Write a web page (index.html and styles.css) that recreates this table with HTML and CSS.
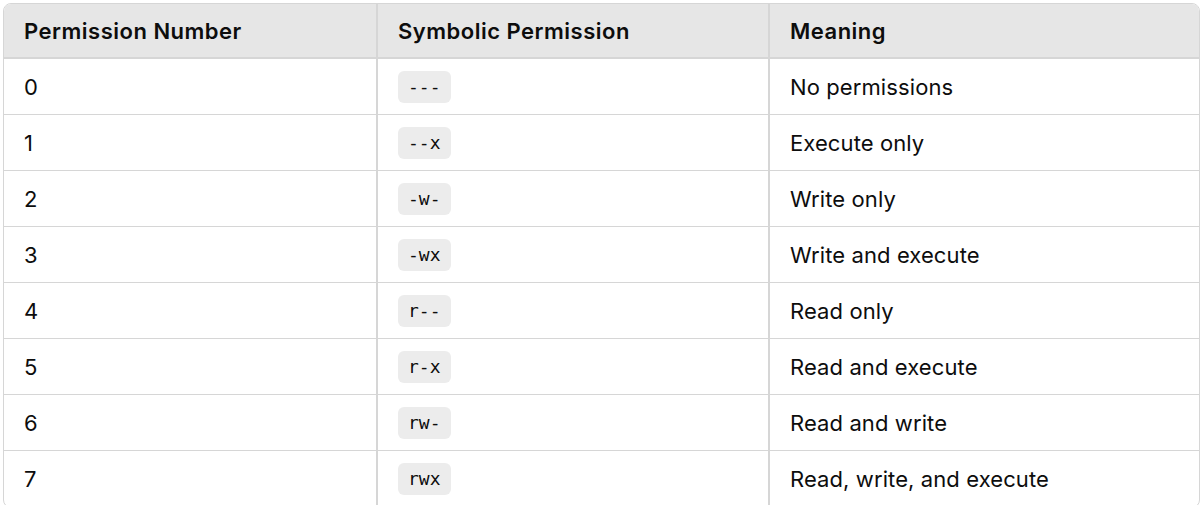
FILE: index.html
```html
<!DOCTYPE html>
<html lang="en">

<head>
  <meta charset="UTF-8">
  <meta name="viewport" content="width=device-width, initial-scale=1.0">
  <title>Permissions</title>

  <link rel="stylesheet" href="styles.css">
</head>

<body>
  <table class="perm-table">
    <thead>
      <tr>
        <th class="col-num">Permission Number</th>
        <th class="col-sym">Symbolic Permission</th>
        <th class="col-mean">Meaning</th>
      </tr>
    </thead>
    <tbody>
      <tr>
        <td>0</td>
        <td><code>---</code></td>
        <td>No permissions</td>
      </tr>
      <tr>
        <td>1</td>
        <td><code>--x</code></td>
        <td>Execute only</td>
      </tr>
      <tr>
        <td>2</td>
        <td><code>-w-</code></td>
        <td>Write only</td>
      </tr>
      <tr>
        <td>3</td>
        <td><code>-wx</code></td>
        <td>Write and execute</td>
      </tr>
      <tr>
        <td>4</td>
        <td><code>r--</code></td>
        <td>Read only</td>
      </tr>
      <tr>
        <td>5</td>
        <td><code>r-x</code></td>
        <td>Read and execute</td>
      </tr>
      <tr>
        <td>6</td>
        <td><code>rw-</code></td>
        <td>Read and write</td>
      </tr>
      <tr>
        <td>7</td>
        <td><code>rwx</code></td>
        <td>Read, write, and execute</td>
      </tr>
    </tbody>
  </table>
</body>

</html>
```

FILE: styles.css
```css
* {
  box-sizing: border-box;
}

body {
  margin: 0;
  padding: 3px 0 0 3px;
  background-color: #fff;
  color: #0d0d0d;
  font-family: Inter, "Liberation Sans", sans-serif;
}

.perm-table {
  width: 1197px;
  border: 1px solid #d6d6d6;
  border-radius: 8px;
  border-collapse: separate;
  border-spacing: 0;
  overflow: hidden;
  table-layout: fixed;
}

.perm-table .col-num {
  width: 372px;
}

.perm-table .col-sym {
  width: 392px;
}

.perm-table th,
.perm-table td {
  padding: 0 20px;
  text-align: left;
  vertical-align: middle;
  font-size: 22px;
  letter-spacing: 0.1px;
  border-bottom: 1px solid #d6d6d6;
  border-left: 2px solid #d6d6d6;
}

.perm-table th:first-child,
.perm-table td:first-child {
  border-left: none;
}

.perm-table th {
  height: 55px;
  font-weight: 600;
  letter-spacing: 0.5px;
  background-color: #e6e6e6;
  border-bottom: 2px solid #d6d6d6;
}

.perm-table td {
  height: 56px;
  font-weight: 400;
}

.perm-table tbody tr:last-child td {
  border-bottom: none;
}

.perm-table code {
  display: inline-block;
  padding: 5px 10px;
  border-radius: 6px;
  background-color: #ececec;
  font-family: "DejaVu Sans Mono", monospace;
  font-size: 18px;
  line-height: 22px;
  letter-spacing: 0;
}
```
